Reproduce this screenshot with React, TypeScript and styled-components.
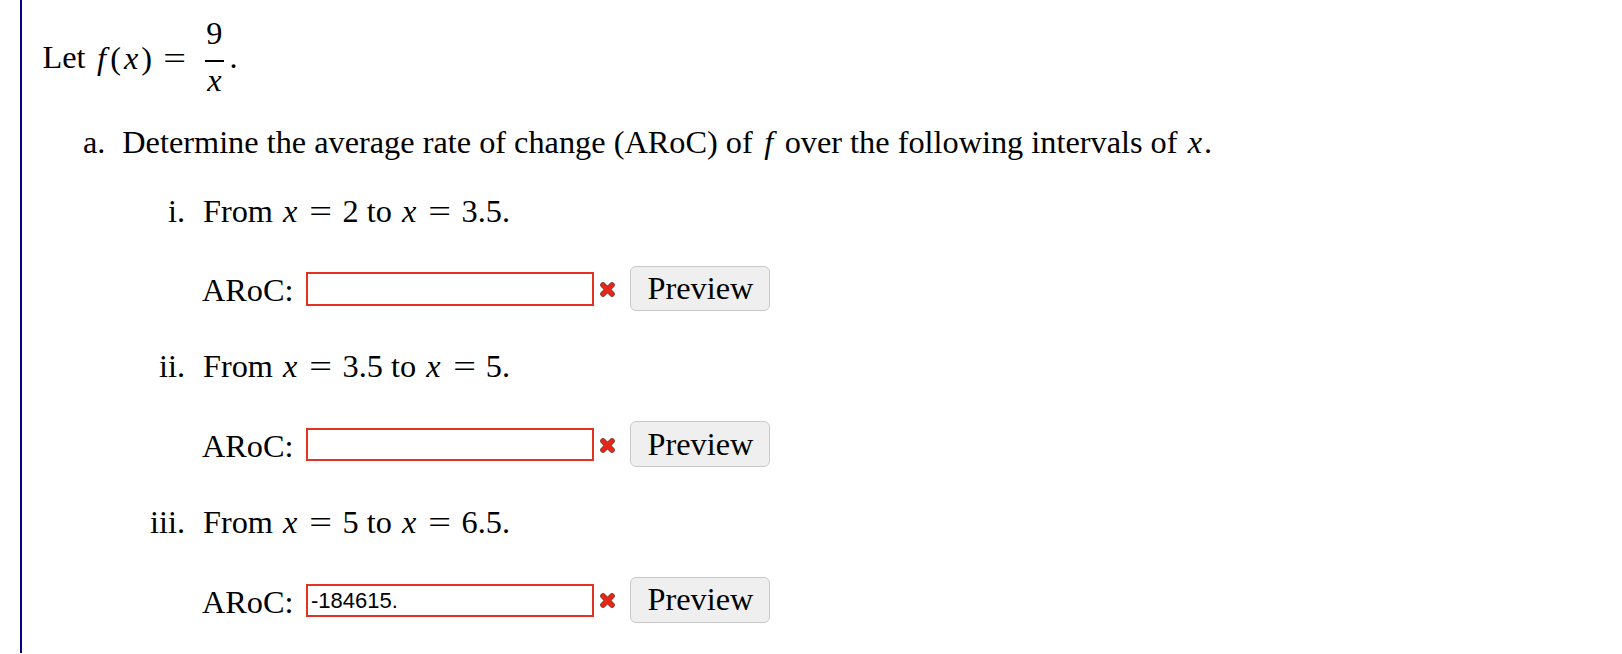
import React from "react";
import styled, { createGlobalStyle } from "styled-components";

const GlobalStyle = createGlobalStyle`
  html, body { margin: 0; padding: 0; background: #ffffff; }
  body { font-family: "Liberation Serif", "Times New Roman", serif; color: #000; }
`;

const Page = styled.div`
  padding-left: 20px;
`;

const Problem = styled.div`
  box-sizing: border-box;
  height: 653px;
  border-left: 2px solid #00008b;
  padding-left: 20.5px;
  font-size: 32.3px;
  line-height: 38.5px;
  display: flow-root;
`;

const Intro = styled.div`
  margin-top: 18.2px;
  white-space: nowrap;
`;

/* math identifier, sized like the TeX math-italic glyph box */
const Mi = styled.span<{ $w: number }>`
  display: inline-block;
  width: ${(p) => p.$w}em;
  font-style: italic;
  text-align: center;
`;

const Paren = styled.span`
  display: inline-block;
  width: 0.389em;
  text-align: center;
`;

const Mo = styled.span`
  display: inline-block;
  width: 0.778em;
  margin: 0 0.278em;
  text-align: center;
  transform: scaleX(1.25);
`;

const Frac = styled.span`
  display: inline-flex;
  flex-direction: column;
  vertical-align: middle;
  padding: 0 5px;
  margin-left: 4px;
  margin-right: 1px;
`;

const Num = styled.span`
  display: block;
  text-align: center;
  line-height: 31px;
  padding-bottom: 11px;
`;

const FracBar = styled.span`
  display: block;
  height: 2px;
  background: #000;
`;

const Den = styled.span`
  display: block;
  text-align: center;
  line-height: 31px;
  padding-top: 2.5px;
  padding-bottom: 8.5px;
`;

const ItemRow = styled.div<{ $top: number }>`
  display: flex;
  margin-top: ${(p) => p.$top}px;
`;

const Marker = styled.span<{ $width: number; $gap: number }>`
  flex: 0 0 ${(p) => p.$width}px;
  box-sizing: border-box;
  padding-right: ${(p) => p.$gap}px;
  text-align: right;
  white-space: nowrap;
`;

const ItemBody = styled.div`
  display: flex;
  flex-direction: column;
  flex: 1 1 auto;
  min-width: 0;
`;

const Line = styled.div`
  white-space: nowrap;
`;

const SubList = styled.div`
  margin-top: 30px;
  display: flex;
  flex-direction: column;
  gap: 36px;
`;

const AnswerRow = styled.div`
  display: flex;
  align-items: center;
  height: 45.6px;
  margin-top: 35.6px;
  margin-left: -1px;
`;

const Label = styled.span`
  margin-right: 12.4px;
  margin-top: 4px;
`;

const AnswerInput = styled.input`
  box-sizing: border-box;
  width: 288px;
  height: 33.2px;
  margin: 1px 0 0 0;
  padding: 2px 3px 0;
  border: 2px solid #e23222;
  border-radius: 0;
  outline: none;
  background: #fff;
  font-family: "Liberation Sans", Arial, Helvetica, sans-serif;
  font-size: 22px;
  color: #000;
`;

const Status = styled.span`
  display: inline-flex;
  margin-left: 5px;
  margin-top: 2px;
`;

const PreviewButton = styled.button`
  box-sizing: border-box;
  width: 140px;
  height: 45.6px;
  margin-left: 14.5px;
  padding: 0;
  border: 1px solid #c9c9c9;
  border-radius: 6px;
  background: #efefef;
  font-family: "Liberation Serif", "Times New Roman", serif;
  font-size: 32.3px;
  color: #000;
`;

const WrongIcon = () => (
  <svg width="17" height="17" viewBox="0 0 17 17" aria-hidden="true">
    <g strokeLinecap="round">
      <line x1="4" y1="4" x2="13" y2="13" stroke="#7a3a30" strokeWidth="5.6" />
      <line x1="13" y1="4" x2="4" y2="13" stroke="#7a3a30" strokeWidth="5.6" />
      <line x1="4" y1="4" x2="13" y2="13" stroke="#e3281a" strokeWidth="4.4" />
      <line x1="13" y1="4" x2="4" y2="13" stroke="#e3281a" strokeWidth="4.4" />
    </g>
  </svg>
);

type Sub = { marker: string; from: string; to: string; value: string };

const subs: Sub[] = [
  { marker: "i.", from: "2", to: "3.5", value: "" },
  { marker: "ii.", from: "3.5", to: "5", value: "" },
  { marker: "iii.", from: "5", to: "6.5", value: "-184615." },
];

export default function App() {
  return (
    <>
      <GlobalStyle />
      <Page>
        <Problem>
          <Intro>
            Let <Mi $w={0.49}>f</Mi>
            <Paren>(</Paren>
            <Mi $w={0.572}>x</Mi>
            <Paren>)</Paren>
            <Mo>=</Mo>
            <Frac>
              <Num>9</Num>
              <FracBar />
              <Den>
                <Mi $w={0.572}>x</Mi>
              </Den>
            </Frac>
            .
          </Intro>
          <ItemRow $top={19}>
            <Marker $width={79.8} $gap={17}>
              a.
            </Marker>
            <ItemBody>
              <Line>
                Determine the average rate of change (ARoC) of <Mi $w={0.49}>f</Mi> over the
                following intervals of <Mi $w={0.572}>x</Mi>.
              </Line>
              <SubList>
                {subs.map((s) => (
                  <ItemRow $top={0} key={s.marker}>
                    <Marker $width={80.7} $gap={18}>
                      {s.marker}
                    </Marker>
                    <ItemBody>
                      <Line>
                        From <Mi $w={0.572}>x</Mi>
                        <Mo>=</Mo>
                        {s.from} to <Mi $w={0.572}>x</Mi>
                        <Mo>=</Mo>
                        {s.to}.
                      </Line>
                      <AnswerRow>
                        <Label>ARoC:</Label>
                        <AnswerInput type="text" defaultValue={s.value} />
                        <Status>
                          <WrongIcon />
                        </Status>
                        <PreviewButton type="button">Preview</PreviewButton>
                      </AnswerRow>
                    </ItemBody>
                  </ItemRow>
                ))}
              </SubList>
            </ItemBody>
          </ItemRow>
        </Problem>
      </Page>
    </>
  );
}
